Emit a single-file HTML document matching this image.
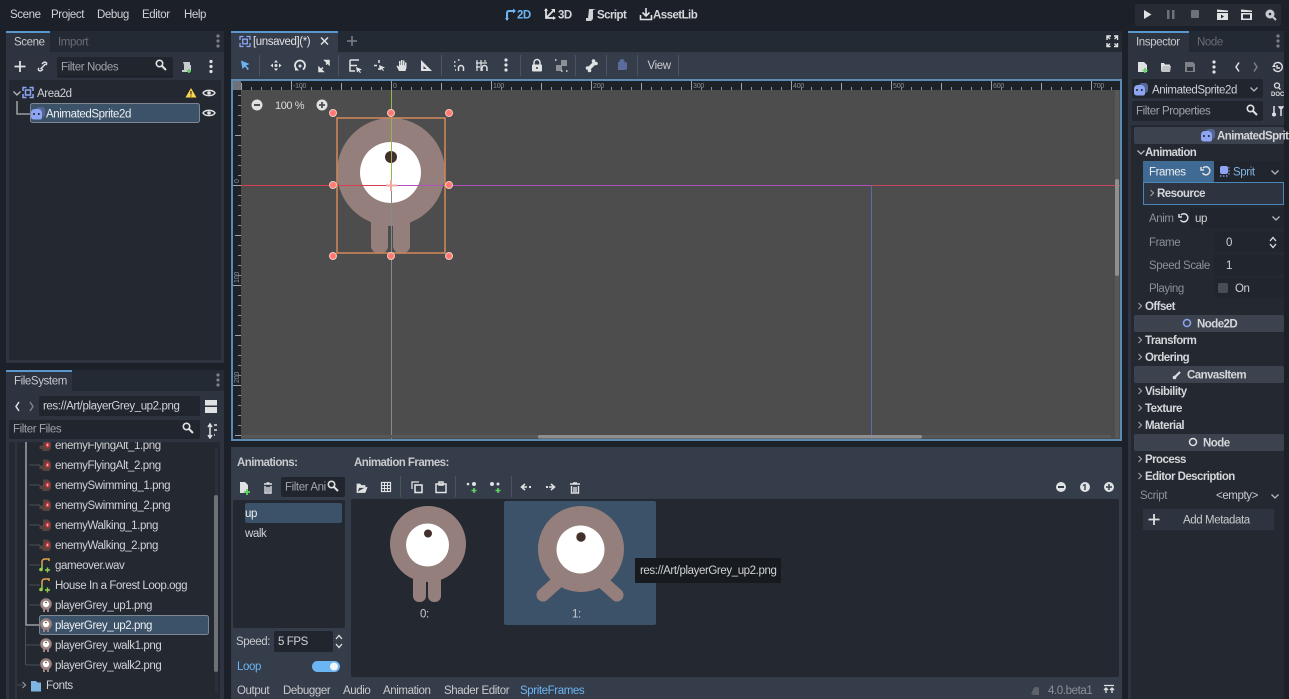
<!DOCTYPE html>
<html><head><meta charset="utf-8"><title>Godot Editor</title>
<style>
html,body{margin:0;padding:0;background:#1c2028;width:1289px;height:699px;overflow:hidden}
svg{display:block}
text{font-family:"Liberation Sans",sans-serif;font-size:11.5px;letter-spacing:-.4px;fill:#d0d2d5}
.b{font-weight:bold;fill:#d4d6d9;font-size:11.5px;letter-spacing:-.55px}
.d{fill:#8d9097}
.m{fill:#c8cacd}
.a{fill:#6bb5f5}
.r{font-size:7px;fill:#8c8f94;letter-spacing:-.2px}
</style></head><body>
<svg width="1289" height="699" viewBox="0 0 1289 699" xmlns="http://www.w3.org/2000/svg">
<defs>
<pattern id="t1" x="241" y="0" width="10" height="10" patternUnits="userSpaceOnUse"><rect x="0" y="7" width="1" height="3" fill="#8b8e93"/></pattern>
<pattern id="t2" x="241" y="0" width="50" height="10" patternUnits="userSpaceOnUse"><rect x="0" y="3" width="1" height="7" fill="#a0a3a8"/></pattern>
<pattern id="l1" x="233" y="95" width="10" height="10" patternUnits="userSpaceOnUse"><rect x="5" y="0" width="3" height="1" fill="#8b8e93"/></pattern>
<pattern id="l2" x="233" y="85" width="10" height="50" patternUnits="userSpaceOnUse"><rect x="2" y="0" width="6" height="1" fill="#a0a3a8"/></pattern>
<g id="dots"><circle cx="0" cy="-5" r="1.600"/><circle cx="0" cy="0" r="1.600"/><circle cx="0" cy="5" r="1.600"/></g>
<g id="srch"><circle cx="-1.500" cy="-1.500" r="3.200" fill="none" stroke="#dfe1e3" stroke-width="1.600"/><path d="M1 1l4 4" stroke="#dfe1e3" stroke-width="2"/></g>
<g id="chev"><path d="M-3.500-1.500L0 2l3.500-3.500" fill="none" stroke="#b5b8bc" stroke-width="1.300"/></g>
<g id="arr"><path d="M-1.500-3L1.500 0l-3 3" fill="none" stroke="#9a9da2" stroke-width="1.200"/></g>
<g id="ghost"><rect x="-1" y="-7" width="9" height="10" rx="3" fill="#566596"/><path d="M-6-2a4 4 0 0 1 4-3h3a4 4 0 0 1 4 4v4.500a2 2 0 0 1-2 2h-6.500a2.500 2.500 0 0 1-2.500-2.500z" fill="#8da5f3"/><circle cx="-3" cy="0" r="1" fill="#1d2229"/><circle cx="1.800" cy="0" r="1" fill="#1d2229"/></g>
<g id="pl"><path d="M-3 2h2v5h-2zM1 2h2v5h-2z" fill="#9a8380"/><circle cx="0" cy="-1" r="5.800" fill="#9a8380"/><circle cx="0" cy="-1" r="3.200" fill="#fff"/><circle cx="0" cy="-2.500" r=".8" fill="#333"/></g>
<g id="en"><path d="M-3-5.500h5l3 3v6l-2 2.500h-6l-1-2h-2.500v-3.500H-3z" fill="#5a423f"/><ellipse cx="1.500" cy="0" rx="2" ry="2.500" fill="#f03a44"/><circle cx="1.500" cy="0" r=".7" fill="#fff"/></g>
<g id="snd"><path d="M-4 0V-3c0-2 1-3 3-3H3v2" fill="none" stroke="#e8a24c" stroke-width="1.500"/><path d="M-4 0v4" stroke="#8fd14f" stroke-width="1.500"/><circle cx="-5" cy="4.500" r="1.800" fill="#8fd14f"/><path d="M1.500 2.500v5M-1 5h5" stroke="#8fd14f" stroke-width="1.400"/></g>
<g id="h"><circle r="3.500" fill="#ff7a70" stroke="#f3c8c2" stroke-width="1"/></g>
</defs>

<!-- base -->
<rect width="1289" height="699" fill="#1c2028"/>

<!-- menu -->
<text x="10" y="18">Scene</text><text x="51" y="18">Project</text><text x="97" y="18">Debug</text><text x="142" y="18">Editor</text><text x="184" y="18">Help</text>
<path d="M507 20v-7c0-1.500 1-2 2-2h5" fill="none" stroke="#6bb5f5" stroke-width="2"/><path d="M513 8.500v5l3-2.500zM505 18h4l-2 3z" fill="#6bb5f5"/>
<text x="517" y="18.500" class="b" style="fill:#6bb5f5">2D</text>
<path d="M546 9v9h8M546 18l7-7" fill="none" stroke="#dfe1e3" stroke-width="1.800"/><path d="M544 11l2-3 2 3zM553 16v4l3-2zM551 9h4v4z" fill="#dfe1e3"/>
<text x="558" y="18.500" class="b">3D</text>
<path d="M589 9h7l-3 1v8c0 1-1 3-3 3h-4v-3h2z" fill="#cfd1d4"/>
<text x="597" y="18.500" class="b">Script</text>
<path d="M646 8v8M642.500 12.500l3.500 3.500 3.500-3.500M640.500 15v4.500h11V15" fill="none" stroke="#dfe1e3" stroke-width="1.600"/>
<text x="653" y="18.500" class="b">AssetLib</text>
<rect x="1135" y="4" width="146" height="22" rx="2" fill="#262b34"/>
<path d="M1144 10v9l7.500-4.500z" fill="#dfe1e3"/>
<path d="M1167 10h2.500v9H1167zM1172 10h2.500v9H1172z" fill="#6d7178"/>
<rect x="1191" y="10" width="8" height="8" rx="1" fill="#6d7178"/>
<path d="M1217 13h11v7h-11zM1217 9.500l11 1v1.500h-11z" fill="#dfe1e3"/><path d="M1221 14.500v4l3-2z" fill="#262b34"/>
<path d="M1241 13h11v7h-11zM1241 9.500l11 1v1.500h-11z" fill="#dfe1e3"/><rect x="1243" y="14.500" width="7" height="4" fill="#262b34"/>
<circle cx="1270" cy="14" r="4.500" fill="#c8cacd"/><circle cx="1270" cy="14" r="1.300" fill="#262b34"/><path d="M1273 17l3 3" stroke="#c8cacd" stroke-width="2"/>

<!-- Scene dock -->
<rect x="6" y="31" width="218" height="21" fill="#242a33"/>
<rect x="6" y="52" width="218" height="311" fill="#2d333f"/>
<rect x="6" y="31" width="44" height="21" fill="#2d333f"/><rect x="6" y="31" width="44" height="2" fill="#5a97cc"/>
<text x="14" y="45.500" class="m">Scene</text><text x="58" y="45.500" style="fill:#686c73">Import</text>
<use href="#dots" x="218" y="41" fill="#7c8087"/>
<path d="M20 61v11M14.500 66.500h11" stroke="#dfe1e3" stroke-width="1.800"/>
<path d="M40.500 69l5-5M39 68c-2 2 1 4 3 2l1-1M46 65c2-2-1-4-3-2l-1 1" fill="none" stroke="#dfe1e3" stroke-width="1.500"/>
<rect x="57" y="57" width="116" height="20" rx="2" fill="#21262e"/><rect x="57" y="76" width="116" height="1.500" fill="#1b1f26"/>
<text x="61" y="70.500" style="fill:#a0a3a8">Filter Nodes</text>
<use href="#srch" x="161" y="65"/>
<path d="M183 62h7v3h1v5h-2v2h-7v-2h2v-5z" fill="#c8cacd"/><path d="M189 69v4M187 71h4" stroke="#5fd35f" stroke-width="1.800"/>
<use href="#dots" x="211" y="66.500" fill="#dfe1e3"/>
<rect x="9" y="80" width="212" height="280" rx="2" fill="#232831"/>
<use href="#chev" x="17" y="93"/>
<path d="M23 91v-3.500h3.500M29.500 87.500H33V91M33 94v3.500h-3.500M26.500 97.500H23V94" fill="none" stroke="#8da5f3" stroke-width="1.500"/><rect x="25.500" y="90" width="5" height="5" fill="none" stroke="#8da5f3" stroke-width="1.500"/>
<text x="37" y="97">Area2d</text>
<path d="M191 88l5.500 9.500h-11z" fill="#fcd34d"/><path d="M191 91v3.500M191 95.500v1" stroke="#3a3020" stroke-width="1.200"/>
<path d="M203 93c2-3.500 10-3.500 12 0-2 3.500-10 3.500-12 0z" fill="none" stroke="#dfe1e3" stroke-width="1.400"/><circle cx="209" cy="93" r="1.800" fill="#dfe1e3"/>
<path d="M17 101v13h14" fill="none" stroke="#9a9da2" stroke-width="1.600"/>
<rect x="30.500" y="103.500" width="169" height="19" rx="2" fill="#3c5269" stroke="#7d8791"/>
<use href="#ghost" x="37" y="114"/>
<text x="46" y="117.500" style="fill:#eef0f2">AnimatedSprite2d</text>
<path d="M203 113c2-3.500 10-3.500 12 0-2 3.500-10 3.500-12 0z" fill="none" stroke="#dfe1e3" stroke-width="1.400"/><circle cx="209" cy="113" r="1.800" fill="#dfe1e3"/>

<!-- FileSystem dock -->
<rect x="6" y="370" width="218" height="21" fill="#242a33"/>
<rect x="6" y="391" width="218" height="308" fill="#2d333f"/>
<rect x="6" y="370" width="66" height="21" fill="#2d333f"/><rect x="6" y="370" width="66" height="2" fill="#5a97cc"/>
<text x="14" y="384.500" class="m">FileSystem</text>
<use href="#dots" x="218" y="380" fill="#7c8087"/>
<path d="M19 402l-3 4.500 3 4.500" fill="none" stroke="#dfe1e3" stroke-width="1.500"/><path d="M30 402l3 4.500-3 4.500" fill="none" stroke="#7c8087" stroke-width="1.500"/>
<rect x="39" y="396" width="161" height="20" rx="2" fill="#21262e"/>
<text x="43" y="409.500">res://Art/playerGrey_up2.png</text>
<rect x="205" y="400" width="12" height="5.500" fill="#dfe1e3"/><rect x="205" y="407" width="12" height="6" fill="#dfe1e3"/>
<rect x="9" y="420" width="191" height="19" rx="2" fill="#21262e"/>
<text x="13" y="432.500" style="fill:#a0a3a8">Filter Files</text>
<use href="#srch" x="188" y="428"/>
<path d="M210 425v12M208 427l2-3 2 3M208 435l2 3 2-3M214 425h3M214 430h3M214 435h1" fill="none" stroke="#dfe1e3" stroke-width="1.500"/>
<rect x="9" y="442" width="211" height="257" rx="2" fill="#232831"/>
<path d="M16 442v257" stroke="#3a3f48" stroke-width="1"/>
<path d="M29 465h11M29 485h11M29 505h11M29 525h11M29 545h11M29 565h11M29 585h11M29 605h11M25.500 627v38M26 645h14M26 665h14M17 685h6" stroke="#4a4f58" stroke-width="1" fill="none"/>
<path d="M26 442V625H40" fill="none" stroke="#9a9da2" stroke-width="1.600"/>
<use href="#en" x="46" y="445"/><use href="#en" x="46" y="465"/><use href="#en" x="46" y="485"/><use href="#en" x="46" y="505"/><use href="#en" x="46" y="525"/><use href="#en" x="46" y="545"/>
<use href="#snd" x="46" y="565"/><use href="#snd" x="46" y="585"/>
<use href="#pl" x="46" y="605"/>
<rect x="39.500" y="615.500" width="169" height="19" rx="2" fill="#3c5269" stroke="#7d8791"/>
<use href="#pl" x="46" y="625"/><use href="#pl" x="46" y="645"/><use href="#pl" x="46" y="665"/>
<g>
<text x="55" y="449">enemyFlyingAlt_1.png</text>
<text x="55" y="469">enemyFlyingAlt_2.png</text>
<text x="55" y="489">enemySwimming_1.png</text>
<text x="55" y="509">enemySwimming_2.png</text>
<text x="55" y="529">enemyWalking_1.png</text>
<text x="55" y="549">enemyWalking_2.png</text>
<text x="55" y="569">gameover.wav</text>
<text x="55" y="589">House In a Forest Loop.ogg</text>
<text x="55" y="609">playerGrey_up1.png</text>
<text x="55" y="629" style="fill:#eef0f2">playerGrey_up2.png</text>
<text x="55" y="649">playerGrey_walk1.png</text>
<text x="55" y="669">playerGrey_walk2.png</text>
<text x="46" y="689">Fonts</text>
</g>
<use href="#arr" x="24" y="685"/>
<path d="M31 681h5l1.500 1.500H41v9H31z" fill="#7fb3e0"/>
<rect x="215" y="448" width="3" height="245" fill="#2b3038"/>
<rect x="214" y="495" width="4" height="177" rx="2" fill="#6e7177"/>
<rect x="9" y="439" width="211" height="3" fill="#2d333f"/>

<!-- Center tabs -->
<rect x="231" y="31" width="891" height="21" fill="#242a33"/>
<rect x="231" y="31" width="107" height="21" fill="#363d4a"/><rect x="231" y="31" width="107" height="2" fill="#5a97cc"/>
<path d="M240 40v-3.500h3.500M246.500 36.500H250V40M250 43v3.500h-3.500M243.500 46.500H240V43" fill="none" stroke="#8da5f3" stroke-width="1.300"/><rect x="242.700" y="39.200" width="4.600" height="4.600" fill="none" stroke="#8da5f3" stroke-width="1.300"/>
<text x="253" y="45" style="fill:#dfe1e3">[unsaved](*)</text>
<path d="M321 37.500l7 7M328 37.500l-7 7" stroke="#dfe1e3" stroke-width="1.500"/>
<path d="M352 36v10M347 41h10" stroke="#7c8087" stroke-width="1.500"/>
<path d="M1107 40v-4h4M1107 36l3 3M1114 36h3.500v4M1117.500 36l-3 3M1107 43v3.500h3.500M1107 46.500l3-3M1114 46.500h3.500V43M1117.500 46.500l-3-3" fill="none" stroke="#dfe1e3" stroke-width="1.400"/>

<!-- Center toolbar -->
<rect x="231" y="52" width="891" height="27" fill="#363d4a"/>
<g fill="#4d535f"><rect x="259" y="55" width="1" height="21"/><rect x="338" y="55" width="1" height="21"/><rect x="441" y="55" width="1" height="21"/><rect x="520" y="55" width="1" height="21"/><rect x="575" y="55" width="1" height="21"/><rect x="606" y="55" width="1" height="21"/><rect x="637" y="55" width="1" height="21"/><rect x="678" y="55" width="1" height="21"/></g>
<path d="M241 60.500l8.500 3.500-3.500 1.500 3 3.500-1.500 1-2.500-3.500-2.500 2.500z" fill="#6bb5f5"/>
<path d="M276 60l2 2.500h-4zM276 71l2-2.500h-4zM270.500 65.500l2.500-2v4zM281.500 65.500l-2.500-2v4z" fill="#dfe1e3"/><circle cx="276" cy="65.500" r="1.500" fill="#dfe1e3"/>
<path d="M297 69.500a5 5 0 1 1 6 0" fill="none" stroke="#dfe1e3" stroke-width="1.800"/><circle cx="300" cy="66" r="1.500" fill="#dfe1e3"/><path d="M295 66v4.500h4z" fill="#dfe1e3"/>
<path d="M319 67.500v4h4zM329 64.500v-4h-4zM321.500 69l1.500-1.500M326 64.500l1.500-1.500" fill="#dfe1e3" stroke="#dfe1e3" stroke-width="1.500"/>
<path d="M350 60h9M350 60v11h5M350 65.500h7" fill="none" stroke="#dfe1e3" stroke-width="1.500"/><path d="M356 67l6 2.500-2.500 1 1.500 2-1 .5-1.500-2-1.500 1.500z" fill="#dfe1e3"/>
<path d="M374 65.500h3M379 60v3M379 68v2" stroke="#dfe1e3" stroke-width="1.500"/><path d="M379 65l6 2.500-2.500 1 1.500 2-1 .5-1.500-2-1.500 1.500z" fill="#dfe1e3"/>
<path d="M399 71l-2.500-5 1.500-.5 1 1.500v-6h1.500v4h.5v-5h1.500v5h.5v-4.500h1.500v5h.5v-3h1.500v5l-1 3.500z" fill="#dfe1e3"/>
<path d="M421 60v11h11z" fill="#dfe1e3"/><path d="M423.500 66v3h3z" fill="#363d4a"/>
<path d="M454 62h1.500M454 66h1.500M458 60h1.500M455 70h1" stroke="#dfe1e3" stroke-width="1.500"/><path d="M458.500 71v-3a2.500 2.500 0 0 1 5 0v3" fill="none" stroke="#dfe1e3" stroke-width="1.500"/>
<path d="M477 60v11M481 60v11M476 63h11M476 67h4" fill="none" stroke="#dfe1e3" stroke-width="1.200"/><path d="M482 71v-3a2.500 2.500 0 0 1 5 0v3" fill="none" stroke="#dfe1e3" stroke-width="1.500"/><path d="M485 60v2" stroke="#dfe1e3" stroke-width="1.200"/>
<use href="#dots" x="506" y="65" fill="#dfe1e3"/>
<rect x="532" y="64.500" width="10" height="7" rx="1" fill="#dfe1e3"/><path d="M534 65v-2.500a3 3 0 0 1 6 0V65" fill="none" stroke="#dfe1e3" stroke-width="1.500"/><circle cx="537" cy="68" r="1" fill="#363d4a"/>
<path d="M561 60h6v6h-6zM556 65h6v6h-6z" fill="#8d9097"/><path d="M555 60h1.500M561 71h1.500M566 71h1.500" stroke="#dfe1e3" stroke-width="1.500"/>
<path d="M588 69.500l7-7" stroke="#dfe1e3" stroke-width="3.500"/><circle cx="587.500" cy="68" r="1.800" fill="#dfe1e3"/><circle cx="589.500" cy="70.500" r="1.800" fill="#dfe1e3"/><circle cx="593.500" cy="61" r="1.800" fill="#dfe1e3"/><circle cx="596" cy="63.500" r="1.800" fill="#dfe1e3"/>
<path d="M618 62h6l3 .5v7l-3 .5h-6z" fill="#5a6c9c"/><circle cx="622" cy="61.500" r="2.500" fill="#5a6c9c"/>
<text x="647.500" y="69" class="m">View</text>

<!-- Viewport -->
<rect x="231" y="79" width="891" height="362" fill="#5b8ab4"/>
<rect x="233" y="81" width="887" height="358" fill="#1d2229"/>
<rect x="241" y="90" width="879" height="349" fill="#4d4d4d"/>
<rect x="233" y="81" width="8" height="9" fill="#6e7177"/>
<rect x="241" y="80" width="879" height="10" fill="url(#t1)"/>
<rect x="241" y="80" width="879" height="10" fill="url(#t2)"/>
<g fill="#a0a3a8"><rect x="291" y="81" width="1" height="9"/><rect x="391" y="81" width="1" height="9"/><rect x="491" y="81" width="1" height="9"/><rect x="591" y="81" width="1" height="9"/><rect x="691" y="81" width="1" height="9"/><rect x="791" y="81" width="1" height="9"/><rect x="891" y="81" width="1" height="9"/><rect x="991" y="81" width="1" height="9"/><rect x="1091" y="81" width="1" height="9"/></g>
<text x="293" y="88" class="r">-100</text><text x="393" y="88" class="r">0</text><text x="493" y="88" class="r">100</text><text x="593" y="88" class="r">200</text><text x="693" y="88" class="r">300</text><text x="793" y="88" class="r">400</text><text x="893" y="88" class="r">500</text><text x="993" y="88" class="r">600</text><text x="1093" y="88" class="r">700</text>
<rect x="233" y="90" width="8" height="349" fill="url(#l1)"/><rect x="233" y="90" width="8" height="349" fill="url(#l2)"/>
<g fill="#a0a3a8"><rect x="233" y="185" width="8" height="1"/><rect x="233" y="285" width="8" height="1"/><rect x="233" y="385" width="8" height="1"/></g>
<text transform="translate(239,183) rotate(-90)" class="r">0</text><text transform="translate(239,283) rotate(-90)" class="r">100</text><text transform="translate(239,383) rotate(-90)" class="r">200</text>
<rect x="871" y="185" width="1" height="254" fill="#5f6aa8"/>
<!-- sprite -->
<rect x="371" y="215" width="17" height="38" rx="7" fill="#957f7c"/><rect x="393" y="215" width="17" height="38" rx="7" fill="#957f7c"/>
<circle cx="391" cy="172" r="54" fill="#957f7c"/>
<circle cx="390.500" cy="172.500" r="30.500" fill="#fff"/>
<circle cx="391" cy="157" r="6" fill="#43302c"/>
<!-- axes -->
<rect x="241" y="185" width="150" height="1" fill="#d8404f"/>
<rect x="391" y="185" width="480" height="1" fill="#b050b8"/>
<rect x="872" y="185" width="248" height="1" fill="#c8455c"/>
<rect x="391" y="90" width="1" height="95" fill="#93b84c"/>
<rect x="391" y="186" width="1" height="253" fill="#7f8f88"/>
<path d="M391 180v11M386 185.500h11" stroke="#f5a8a0" stroke-width="2" fill="none"/>
<rect x="337" y="118" width="108" height="135" fill="none" stroke="#cc8558" stroke-width="1.600"/>
<use href="#h" x="333" y="113"/><use href="#h" x="391" y="113"/><use href="#h" x="449" y="113"/>
<use href="#h" x="333" y="185"/><use href="#h" x="449" y="185"/>
<use href="#h" x="333" y="256"/><use href="#h" x="391" y="256"/><use href="#h" x="449" y="256"/>
<circle cx="257" cy="105" r="5.500" fill="#e0e0e0"/><rect x="254" y="104" width="6" height="2" fill="#4d4d4d"/>
<text x="275" y="109" style="fill:#dcdcdc;font-size:11px">100 %</text>
<circle cx="322" cy="105" r="5.500" fill="#e0e0e0"/><path d="M319 105h6M322 102v6" stroke="#4d4d4d" stroke-width="1.800"/>
<rect x="1115" y="90" width="4" height="348" fill="#585858"/>
<rect x="1115" y="179" width="4" height="97" rx="2" fill="#8f8f8f"/>
<rect x="241" y="435" width="870" height="3" fill="#585858"/>
<rect x="538" y="435" width="384" height="3.500" rx="1.500" fill="#8f8f8f"/>

<!-- Bottom panel -->
<rect x="231" y="447" width="891" height="252" fill="#363d4a"/>
<text x="237" y="466" class="b" style="fill:#c8cacd">Animations:</text>
<text x="354" y="466" class="b" style="fill:#c8cacd">Animation Frames:</text>
<path d="M240 482h5l3 3v8h-8z" fill="#dfe1e3"/><path d="M247 489v6M244 492h6" stroke="#5fd35f" stroke-width="1.800"/>
<path d="M264 484h8M266.500 483h3M265 486v7h6v-7M267 487v5M269 487v5" fill="none" stroke="#dfe1e3" stroke-width="1.400"/>
<rect x="281" y="477" width="64" height="20" rx="2" fill="#21262e"/>
<text x="285" y="490.500" style="fill:#a0a3a8">Filter Ani</text>
<use href="#srch" x="333" y="486"/>
<path d="M357 492v-8h3l1 1.500h4v2M357 492.500h8l2-5h-8z" fill="#dfe1e3" stroke="#dfe1e3" stroke-width=".8"/>
<rect x="381.500" y="482.500" width="9" height="9" fill="none" stroke="#dfe1e3" stroke-width="1.200"/><path d="M384.500 482v10M387.500 482v10M381 485.500h10M381 488.500h10" stroke="#dfe1e3" stroke-width="1"/>
<rect x="400" y="476" width="1" height="21" fill="#4d535f"/>
<path d="M412 489v-7h7" fill="none" stroke="#dfe1e3" stroke-width="1.300"/><rect x="415" y="485" width="7" height="7.500" fill="none" stroke="#dfe1e3" stroke-width="1.600"/>
<path d="M436 484h10v8.500h-10zM439 482h4v3h-4z" fill="none" stroke="#dfe1e3" stroke-width="1.500"/>
<rect x="455" y="476" width="1" height="21" fill="#4d535f"/>
<circle cx="468" cy="484" r="1.300" fill="#dfe1e3"/><circle cx="474" cy="484" r="2" fill="#dfe1e3"/><path d="M474 488v5M471.500 490.500h5" stroke="#5fd35f" stroke-width="1.600"/>
<circle cx="492" cy="484" r="2" fill="#dfe1e3"/><circle cx="498" cy="484" r="1.500" fill="#dfe1e3"/><path d="M498 488v5M495.500 490.500h5" stroke="#5fd35f" stroke-width="1.600"/>
<rect x="511" y="476" width="1" height="21" fill="#4d535f"/>
<path d="M522 487h5M525 484l-3.500 3 3.500 3" fill="none" stroke="#dfe1e3" stroke-width="1.600"/><rect x="529" y="486" width="2" height="2" fill="#dfe1e3"/>
<path d="M549 487h5M551 484l3.500 3-3.500 3" fill="none" stroke="#dfe1e3" stroke-width="1.600"/><rect x="546" y="486" width="2" height="2" fill="#dfe1e3"/>
<path d="M570 484h10M573 483h4M571.500 486v7h7v-7M574 487v5M576 487v5" fill="none" stroke="#dfe1e3" stroke-width="1.400"/>
<circle cx="1061" cy="487" r="5" fill="#dfe1e3"/><rect x="1058" y="486" width="6" height="2" fill="#363d4a"/>
<circle cx="1085" cy="487" r="5" fill="#dfe1e3"/><path d="M1085 484v6M1084 485l-1 .5" stroke="#363d4a" stroke-width="1.400"/>
<circle cx="1109" cy="487" r="5" fill="#dfe1e3"/><path d="M1106 487h6M1109 484v6" stroke="#363d4a" stroke-width="1.500"/>

<rect x="233" y="500" width="112" height="128" rx="2" fill="#232831"/>
<rect x="245" y="503" width="97" height="20" rx="2" fill="#3c5269"/>
<text x="245" y="517" style="fill:#eef0f2">up</text>
<text x="245" y="537">walk</text>
<text x="236" y="645" class="m">Speed:</text>
<rect x="274" y="631" width="59" height="21" rx="2" fill="#21262e"/>
<text x="278" y="645">5 FPS</text>
<path d="M336 639l3-3.500 3 3.500M336 644l3 3.500 3-3.500" fill="none" stroke="#dfe1e3" stroke-width="1.300"/>
<text x="237" y="670" style="fill:#6bb5f5">Loop</text>
<rect x="312" y="661" width="28" height="11" rx="5.500" fill="#6bb5f5"/><circle cx="334" cy="666.500" r="4" fill="#f2f6fb"/>

<rect x="351" y="499" width="768" height="178" rx="2" fill="#232831"/>
<rect x="413" y="570" width="13" height="32" rx="6" fill="#957f7c"/><rect x="428" y="570" width="13" height="32" rx="6" fill="#957f7c"/>
<circle cx="428" cy="544" r="38" fill="#957f7c"/><circle cx="427.500" cy="545" r="21.500" fill="#fff"/><circle cx="428" cy="533.500" r="4" fill="#43302c"/>
<text x="420" y="617.500" class="m">0:</text>
<rect x="504" y="501" width="152" height="124" rx="2" fill="#3c5269"/>
<path d="M543 595l20-18M617 595l-20-18" stroke="#957f7c" stroke-width="13" stroke-linecap="round"/>
<circle cx="581" cy="549" r="43" fill="#957f7c"/><circle cx="580.500" cy="549.500" r="24" fill="#fff"/><circle cx="581" cy="537" r="4.700" fill="#43302c"/>
<text x="572" y="617.500" class="m">1:</text>
<rect x="635" y="558" width="146" height="25" fill="#171a1e"/>
<text x="640" y="574">res://Art/playerGrey_up2.png</text>

<text x="237" y="694" class="m">Output</text><text x="283" y="694" class="m">Debugger</text><text x="343" y="694" class="m">Audio</text><text x="383" y="694" class="m">Animation</text><text x="444" y="694" class="m">Shader Editor</text><text x="520" y="694" style="fill:#6bb5f5">SpriteFrames</text>
<path d="M1031 694l3-6c.500-1.500 4-1.500 5 0v7h-5z" fill="#5d6268"/>
<text x="1048" y="694" class="d">4.0.beta1</text>
<path d="M1104 685.500h10M1106 693v-4M1104 690l2-2 2 2M1112 693v-4M1110 690l2-2 2 2" fill="none" stroke="#dfe1e3" stroke-width="1.300"/>

<!-- Inspector dock -->
<rect x="1128" y="31" width="156" height="21" fill="#242a33"/>
<rect x="1128" y="52" width="156" height="647" fill="#2d333f"/>
<rect x="1128" y="31" width="61" height="21" fill="#2d333f"/><rect x="1128" y="31" width="61" height="2" fill="#5a97cc"/>
<text x="1136" y="45.500" class="m">Inspector</text><text x="1197" y="45.500" style="fill:#686c73">Node</text>
<use href="#dots" x="1278" y="41" fill="#7c8087"/>
<path d="M1138 62h6l3 3v7h-9z" fill="#dfe1e3"/><path d="M1145 68v5M1142.500 70.500h5" stroke="#5fd35f" stroke-width="1.600"/>
<path d="M1161 71v-8h3l1 1.500h5v7h-8z" fill="#dfe1e3"/><path d="M1161 71l2-5h8l-1 6h-8z" fill="#c0c2c5"/>
<path d="M1185 62h8l2 2v8h-10z" fill="#7c8087"/><rect x="1187" y="67" width="6" height="4" fill="#2d333f"/>
<use href="#dots" x="1214" y="67" fill="#dfe1e3"/>
<path d="M1239 62.500l-3 4.500 3 4.500" fill="none" stroke="#dfe1e3" stroke-width="1.500"/><path d="M1254 62.500l3 4.500-3 4.500" fill="none" stroke="#7c8087" stroke-width="1.500"/>
<path d="M1274 64.500a4.500 4.500 0 1 1-.5 4M1277 65v3h3" fill="none" stroke="#dfe1e3" stroke-width="1.400"/><path d="M1272 67l2-3 2 3z" fill="#dfe1e3"/>
<rect x="1132" y="79" width="131" height="19" rx="2" fill="#21262e"/>
<use href="#ghost" x="1140" y="90"/>
<text x="1152" y="93.500">AnimatedSprite2d</text>
<use href="#chev" x="1254" y="89"/>
<circle cx="1277" cy="85.500" r="2.500" fill="none" stroke="#dfe1e3" stroke-width="1.300"/><path d="M1279 88l1.500 1.500" stroke="#dfe1e3" stroke-width="1.300"/>
<text x="1271" y="96" style="font-size:6px;font-weight:bold;fill:#dfe1e3;letter-spacing:0">DOC</text>
<rect x="1132" y="101" width="131" height="20" rx="2" fill="#21262e"/>
<text x="1136" y="114.500" style="fill:#a0a3a8">Filter Properties</text>
<use href="#srch" x="1252" y="110"/>
<path d="M1274 106v5M1274 111v5M1281 106v10M1279 106c0 3 4 3 4 0" fill="none" stroke="#dfe1e3" stroke-width="1.500"/><circle cx="1274" cy="114.500" r="2" fill="#dfe1e3"/>
<rect x="1131" y="125" width="153" height="410" fill="#232831"/>
<rect x="1134" y="127" width="150" height="17" rx="2" fill="#3d434e"/>
<use href="#ghost" x="1207" y="136"/>
<text x="1217" y="139.500" class="b">AnimatedSprit</text>
<use href="#chev" x="1141" y="152"/>
<text x="1145" y="156" class="b">Animation</text>
<rect x="1143" y="161" width="71" height="21" fill="#3e6a94"/>
<text x="1149" y="175.500" style="fill:#eef0f2">Frames</text>
<path d="M1203 168a4 4 0 1 1-.5 5M1201 167v3h3" fill="none" stroke="#dfe1e3" stroke-width="1.500"/>
<rect x="1214" y="161" width="70" height="21" fill="#21262e"/>
<rect x="1220" y="166" width="8" height="8" rx="2" fill="#8da5f3"/><path d="M1220 176h9" stroke="#8da5f3" stroke-width="1.200" stroke-dasharray="1.500 1.500"/><path d="M1229 167v8" stroke="#8da5f3" stroke-dasharray="1.500 1.500"/>
<text x="1233" y="175.500" style="fill:#7fb3e0">Sprit</text>
<use href="#chev" x="1275" y="172"/>
<rect x="1143.500" y="182.500" width="140" height="22" fill="#2d333f" stroke="#4a86b8"/>
<use href="#arr" x="1152" y="193"/>
<text x="1157" y="197" class="b">Resource</text>
<text x="1149" y="222" class="d">Anim</text>
<path d="M1181 215a4 4 0 1 1-.5 5M1179 214v3h3" fill="none" stroke="#dfe1e3" stroke-width="1.500"/>
<rect x="1190" y="208" width="94" height="20" fill="#21262e"/>
<text x="1195" y="222">up</text>
<use href="#chev" x="1276" y="218"/>
<text x="1149" y="246" class="d">Frame</text>
<rect x="1214" y="232" width="70" height="20" fill="#21262e"/>
<text x="1226" y="246">0</text>
<path d="M1270 241l3-3.500 3 3.500M1270 244l3 3.500 3-3.500" fill="none" stroke="#dfe1e3" stroke-width="1.300"/>
<text x="1149" y="269" class="d">Speed Scale</text>
<rect x="1214" y="255" width="70" height="20" fill="#21262e"/>
<text x="1226" y="269">1</text>
<text x="1149" y="292" class="d">Playing</text>
<rect x="1214" y="278" width="70" height="20" fill="#21262e"/>
<rect x="1218" y="283" width="10" height="10" rx="2" fill="#494d55"/>
<text x="1235" y="292">On</text>
<use href="#arr" x="1140" y="306"/><text x="1145" y="310" class="b">Offset</text>
<rect x="1134" y="315" width="150" height="17" rx="2" fill="#3d434e"/>
<circle cx="1187" cy="323" r="3.500" fill="none" stroke="#8da5f3" stroke-width="1.500"/>
<text x="1197" y="327.500" class="b">Node2D</text>
<use href="#arr" x="1140" y="340"/><text x="1145" y="344" class="b">Transform</text>
<use href="#arr" x="1140" y="357"/><text x="1145" y="361" class="b">Ordering</text>
<rect x="1134" y="366" width="150" height="17" rx="2" fill="#3d434e"/>
<path d="M1174 378l6-6" stroke="#dfe1e3" stroke-width="2"/><circle cx="1174.500" cy="377.500" r="1.800" fill="#dfe1e3"/>
<text x="1187" y="378.500" class="b">CanvasItem</text>
<use href="#arr" x="1140" y="391"/><text x="1145" y="395" class="b">Visibility</text>
<use href="#arr" x="1140" y="408"/><text x="1145" y="412" class="b">Texture</text>
<use href="#arr" x="1140" y="425"/><text x="1145" y="429" class="b">Material</text>
<rect x="1134" y="434" width="150" height="17" rx="2" fill="#3d434e"/>
<circle cx="1193" cy="442" r="3.500" fill="none" stroke="#dfe1e3" stroke-width="1.500"/>
<text x="1203" y="446.500" class="b">Node</text>
<use href="#arr" x="1140" y="459"/><text x="1145" y="463" class="b">Process</text>
<use href="#arr" x="1140" y="476"/><text x="1145" y="480" class="b">Editor Description</text>
<rect x="1131" y="485" width="153" height="214" fill="#232831"/>
<text x="1140" y="499" class="d">Script</text>
<text x="1216" y="499" style="fill:#c8cacd">&lt;empty&gt;</text>
<use href="#chev" x="1275" y="496"/>
<rect x="1143" y="509" width="131" height="21" fill="#2d333f"/>
<path d="M1154 514v11M1148.500 519.500h11" stroke="#dfe1e3" stroke-width="1.800"/>
<text x="1183" y="523.500" class="m">Add Metadata</text>
<rect x="1128" y="52" width="3" height="647" fill="#2d333f"/>
</svg>
</body></html>
